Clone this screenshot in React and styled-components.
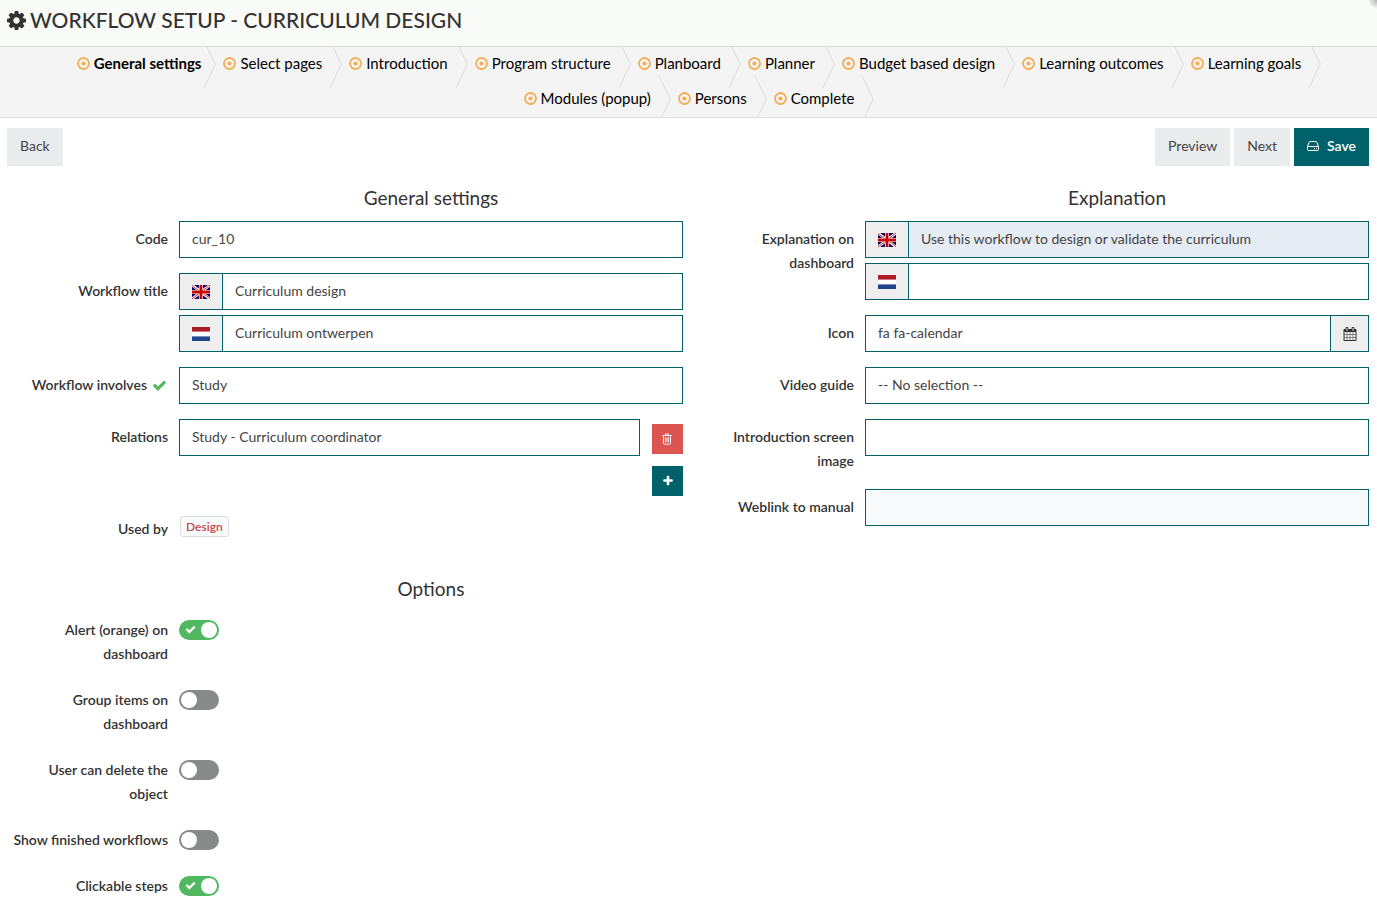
import React, { useState } from "react";
import styled, { createGlobalStyle, css } from "styled-components";

const teal = "#00616b";
const green = "#50b860";

const GlobalStyle = createGlobalStyle`
  *, *::before, *::after { box-sizing: border-box; }
  body {
    margin: 0;
    background: #fff;
    color: #333;
    font: 14px/24px Lato, "Noto Sans", sans-serif;
  }
  button, input, select { font: inherit; color: inherit; margin: 0; border-radius: 0; }
`;

const Header = styled.header`
  display: flex;
  align-items: center;
  gap: 4px;
  height: 47px;
  padding: 0 7px 6px;
  border-bottom: 1px solid #dcdedd;
  background: radial-gradient(circle at top right, #b4b4b4 0, #f9fbf8 9px);
`;

const PageTitle = styled.h1`
  margin: 0;
  font-size: 21px;
  line-height: 28px;
  font-weight: 500;
  text-transform: uppercase;
`;

const Steps = styled.ol`
  display: flex;
  flex-wrap: wrap;
  justify-content: center;
  margin: 0;
  padding: 0 0 0 28px;
  list-style: none;
  overflow: hidden;
  background: #f4f4f4;
  border-bottom: 1px solid #dcdedd;
`;

const Step = styled.li`
  position: relative;
  height: 35px;
  padding-right: ${(p) => (p.$active ? 22 : 27)}px;
`;

const StepLink = styled.a`
  display: flex;
  align-items: center;
  gap: 4px;
  height: 32px;
  color: #000;
  font-size: 15px;
  font-weight: ${(p) => (p.$active ? 700 : 400)};
  text-decoration: none;
`;

const Chevron = styled.svg`
  position: absolute;
  top: -7px;
  right: 7px;
  fill: none;
  stroke: #dcdcdc;
`;

const Toolbar = styled.div`
  display: flex;
  gap: 4px;
  padding: 10px 8px 0 7px;
`;

const Button = styled.button`
  display: flex;
  align-items: center;
  gap: 8px;
  height: 38px;
  padding: 0 13px 2px;
  border: 0;
  background: #eaebed;
  color: #444;
  cursor: pointer;
  ${(p) =>
    p.$primary &&
    css`
      background: ${teal};
      color: #fff;
      font-weight: 600;
    `}
`;

const Spacer = styled.div`
  flex: 1;
`;

const Columns = styled.main`
  display: grid;
  grid-template-columns: 1fr 1fr;
  gap: 10px;
  padding: 20px 8px 0 7px;
`;

const Column = styled.div`
  display: flex;
  flex-direction: column;
  gap: 35px;
`;

const Section = styled.section`
  display: flex;
  flex-direction: column;
  gap: 15px;
`;

const SectionTitle = styled.h2`
  margin: 0 0 -4px 172px;
  font-size: 19px;
  line-height: 24px;
  font-weight: 400;
  text-align: center;
`;

const Row = styled.div`
  display: grid;
  grid-template-columns: 161px minmax(0, 1fr);
  gap: 11px;
`;

const Label = styled.label`
  padding: 6px 0 0 4px;
  margin-bottom: 1px;
  font-weight: 600;
  text-align: right;
`;

const CheckMark = styled.span`
  display: inline-flex;
  margin: 0 2px 2px 6px;
  vertical-align: middle;
`;

const Stack = styled.div`
  display: flex;
  flex-direction: column;
  gap: 5px;
`;

const Group = styled.div`
  display: flex;
`;

const fieldStyle = css`
  appearance: none;
  flex: 1;
  width: 100%;
  min-width: 0;
  height: 37px;
  padding: 0 12px 2px;
  border: 1px solid ${teal};
  outline: 0;
  color: #444;
`;

const fills = { plain: "#fff", focus: "#e5ecf4", pale: "#f8f9fb" };

const Input = styled.input`
  ${fieldStyle}
  background: ${(p) => fills[p.$fill || "plain"]};
`;

const Select = styled.select`
  ${fieldStyle}
  background: #fff;
`;

const Addon = styled.span`
  display: flex;
  align-items: center;
  justify-content: center;
  width: 43px;
  height: 37px;
  border: solid ${teal};
  border-width: 1px 0 1px 1px;
  background: #eee;
`;

const PickerButton = styled.button`
  display: flex;
  align-items: center;
  justify-content: center;
  width: 38px;
  height: 37px;
  padding: 0;
  border: solid ${teal};
  border-width: 1px 1px 1px 0;
  background: #eee;
`;

const RelationRow = styled.div`
  display: flex;
  align-items: flex-start;
  gap: 12px;
`;

const RelationActions = styled.div`
  display: flex;
  flex-direction: column;
  gap: 12px;
  padding-top: 5px;
`;

const SquareButton = styled.button`
  display: flex;
  align-items: center;
  justify-content: center;
  width: 31px;
  height: 30px;
  padding: 0;
  border: 0;
  color: #fff;
  background: ${(p) => (p.$danger ? "#dd5551" : teal)};
`;

const Tag = styled.a`
  justify-self: start;
  align-self: start;
  margin: 5px 0 0 1px;
  padding: 0 5px;
  border: 1px solid #d9dde1;
  border-radius: 3px;
  background: #f9fafc;
  color: #c44b4b;
  font-size: 12px;
  line-height: 19px;
  font-weight: 600;
  text-decoration: none;
`;

const Switch = styled.span`
  position: relative;
  width: 40px;
  height: 20px;
  margin-top: 8px;
`;

const SwitchInput = styled.input`
  appearance: none;
  display: block;
  width: 40px;
  height: 20px;
  border-radius: 10px;
  background: ${(p) => (p.checked ? green : "#88898b")};
  cursor: pointer;

  &::after {
    content: "";
    position: absolute;
    top: 2px;
    left: ${(p) => (p.checked ? "22px" : "2px")};
    width: 16px;
    height: 16px;
    border-radius: 50%;
    background: #fff;
  }
`;

const SwitchCheck = styled.span`
  position: absolute;
  top: 4px;
  left: 6px;
  display: flex;
  pointer-events: none;
`;

const glyphs = {
  cog: "M1152 896q0-106-75-181t-181-75-181 75-75 181 75 181 181 75 181-75 75-181zm512-109v222q0 12-8 23t-20 13l-185 28q-19 54-39 91 35 50 107 138 10 12 10 25t-9 23q-27 37-99 108t-94 71q-12 0-26-9l-138-108q-44 23-91 38-16 136-29 186-7 28-36 28h-222q-14 0-24.5-8.5t-11.5-21.5l-28-184q-49-16-90-37l-141 107q-10 9-25 9-14 0-25-11-126-114-165-168-7-10-7-23 0-12 8-23 15-21 51-66.5t54-70.5q-27-50-41-99l-183-27q-13-2-21-12.5t-8-23.5v-222q0-12 8-23t19-13l186-28q14-46 39-92-40-57-107-138-10-12-10-24 0-10 9-23 26-36 98.5-107.5t94.5-71.5q13 0 26 10l138 107q44-23 91-38 16-136 29-186 7-28 36-28h222q14 0 24.5 8.5t11.5 21.5l28 184q49 16 90 37l142-107q9-9 24-9 13 0 25 10 129 119 165 170 7 8 7 22 0 12-8 23-15 21-51 66.5t-54 70.5q26 50 41 98l183 28q13 2 21 12.5t8 23.5z",
  plus: "M1600 736v192q0 40-28 68t-68 28h-416v416q0 40-28 68t-68 28h-192q-40 0-68-28t-28-68v-416h-416q-40 0-68-28t-28-68v-192q0-40 28-68t68-28h416v-416q0-40 28-68t68-28h192q40 0 68 28t28 68v416h416q40 0 68 28t28 68z",
  check:
    "M1671 566q0 40-28 68l-724 724-136 136q-28 28-68 28t-68-28l-136-136-362-362q-28-28-28-68t28-68l136-136q28-28 68-28t68 28l294 295 656-657q28-28 68-28t68 28l136 136q28 28 28 68z",
  calendar:
    "M192 1664h288v-288h-288v288zm352 0h320v-288h-320v288zm-352-352h288v-320h-288v320zm352 0h320v-320h-320v320zm-352-384h288v-288h-288v288zm736 736h320v-288h-320v288zm-384-736h320v-288h-320v288zm768 736h288v-288h-288v288zm-384-352h320v-320h-320v320zm-352-864v-288q0-13-9.5-22.5t-22.5-9.5h-64q-13 0-22.5 9.5t-9.5 22.5v288q0 13 9.5 22.5t22.5 9.5h64q13 0 22.5-9.5t9.5-22.5zm736 864h288v-320h-288v320zm-384-384h320v-288h-320v288zm384 0h288v-288h-288v288zm32-480v-288q0-13-9.5-22.5t-22.5-9.5h-64q-13 0-22.5 9.5t-9.5 22.5v288q0 13 9.5 22.5t22.5 9.5h64q13 0 22.5-9.5t9.5-22.5zm384-64v1280q0 52-38 90t-90 38h-1408q-52 0-90-38t-38-90v-1280q0-52 38-90t90-38h128v-96q0-66 47-113t113-47h64q66 0 113 47t47 113v96h384v-96q0-66 47-113t113-47h64q66 0 113 47t47 113v96h128q52 0 90 38t38 90z",
};

const Glyph = ({ name, size, color = "currentColor", box = "0 0 1792 1792" }) => (
  <svg width={size} height={size} viewBox={box} fill={color} aria-hidden="true">
    <path d={glyphs[name]} />
  </svg>
);

const StepDot = () => (
  <svg width="13" height="13" viewBox="0 0 13 13" aria-hidden="true">
    <circle cx="6.5" cy="6.5" r="5.5" fill="none" stroke="#f3ae55" strokeWidth="1.8" />
    <circle cx="6.5" cy="6.5" r="2.1" fill="#f3ae55" />
  </svg>
);

const DriveIcon = () => (
  <svg width="12" height="12" viewBox="0 0 12 12" fill="none" stroke="#fff" aria-hidden="true">
    <path d="M.5 6.5 2.1 2.3Q2.4 1.5 3.2 1.5H8.8Q9.6 1.5 9.9 2.3L11.5 6.5V9.6Q11.5 10.5 10.6 10.5H1.4Q.5 10.5 .5 9.6ZM.5 6.5H11.5" />
    <path d="M7 8.5H8M9 8.5H10" />
  </svg>
);

const TrashIcon = () => (
  <svg width="11" height="12" viewBox="0 0 11 12" fill="none" stroke="#fff" strokeWidth=".9" aria-hidden="true">
    <path d="M.3 2.5H9.7M3.2 2.4 3.7 .9H6.3L6.8 2.4M1.5 2.5V10.2Q1.5 11.2 2.4 11.2H7.6Q8.5 11.2 8.5 10.2V2.5M3.4 4.3V9.3M5 4.3V9.3M6.6 4.3V9.3" />
  </svg>
);

const FlagUK = () => (
  <svg width="18" height="14" viewBox="0 0 18 14" role="img" aria-label="English">
    <path fill="#006" d="M0 0H18V14H0z" />
    <path stroke="#fff" strokeWidth="2.6" d="M0 0 18 14M18 0 0 14" />
    <path stroke="#d22" strokeWidth="1" d="M0 .5 9 7.5M18 0 9 7M18 13.5 9 6.5M0 14 9 7" />
    <path stroke="#fff" strokeWidth="4.2" d="M9 0V14M0 7H18" />
    <path stroke="#c00" strokeWidth="2.8" d="M9 0V14M0 7H18" />
  </svg>
);

const FlagNL = () => (
  <svg width="18" height="14" viewBox="0 0 18 14" role="img" aria-label="Dutch">
    <path fill="#fff" d="M0 0H18V14H0z" />
    <path fill="#ae1c28" d="M0 0H18V4.6H0z" />
    <path fill="#21468b" d="M0 9.4H18V14H0z" />
  </svg>
);

const steps = [
  "General settings",
  "Select pages",
  "Introduction",
  "Program structure",
  "Planboard",
  "Planner",
  "Budget based design",
  "Learning outcomes",
  "Learning goals",
  "Modules (popup)",
  "Persons",
  "Complete",
];

const options = [
  ["Alert (orange) on dashboard", true],
  ["Group items on dashboard", false],
  ["User can delete the object", false],
  ["Show finished workflows", false],
  ["Clickable steps", true],
];

function Toggle({ label, id, initial }) {
  const [on, setOn] = useState(initial);
  return (
    <Row>
      <Label htmlFor={id}>{label}</Label>
      <Switch>
        <SwitchInput id={id} type="checkbox" checked={on} onChange={() => setOn(!on)} />
        {on && (
          <SwitchCheck>
            <Glyph name="check" size={11} color="#fff" />
          </SwitchCheck>
        )}
      </Switch>
    </Row>
  );
}

function Translated({ id, label, en, nl, fill }) {
  return (
    <Row>
      <Label htmlFor={id}>{label}</Label>
      <Stack>
        <Group>
          <Addon>
            <FlagUK />
          </Addon>
          <Input id={id} defaultValue={en} $fill={fill} />
        </Group>
        <Group>
          <Addon>
            <FlagNL />
          </Addon>
          <Input aria-label={`${label} (Dutch)`} defaultValue={nl} />
        </Group>
      </Stack>
    </Row>
  );
}

export default function App() {
  return (
    <>
      <GlobalStyle />
      <Header>
        <Glyph name="cog" size={19} box="128 128 1536 1536" />
        <PageTitle>Workflow setup - Curriculum design</PageTitle>
      </Header>
      <nav aria-label="Workflow steps">
        <Steps>
          {steps.map((name, i) => (
            <Step key={name} $active={i === 0}>
              <StepLink href="#" $active={i === 0} aria-current={i === 0 ? "step" : undefined}>
                <StepDot />
                {name}
              </StepLink>
              <Chevron width="13" height="48" viewBox="0 0 13 48" aria-hidden="true">
                <path d="M.5 0 12.3 24 1 48" />
              </Chevron>
            </Step>
          ))}
        </Steps>
      </nav>
      <Toolbar>
        <Button type="button">Back</Button>
        <Spacer />
        <Button type="button">Preview</Button>
        <Button type="button">Next</Button>
        <Button type="button" $primary>
          <DriveIcon />
          Save
        </Button>
      </Toolbar>
      <Columns>
        <Column>
          <Section>
            <SectionTitle>General settings</SectionTitle>
            <Row>
              <Label htmlFor="code">Code</Label>
              <Input id="code" defaultValue="cur_10" />
            </Row>
            <Translated id="title" label="Workflow title" en="Curriculum design" nl="Curriculum ontwerpen" />
            <Row>
              <Label htmlFor="involves">
                Workflow involves
                <CheckMark>
                  <Glyph name="check" size={13} color={green} box="120 200 1560 1400" />
                </CheckMark>
              </Label>
              <Select id="involves">
                <option>Study</option>
              </Select>
            </Row>
            <Row>
              <Label htmlFor="relations">Relations</Label>
              <RelationRow>
                <Select id="relations">
                  <option>Study - Curriculum coordinator</option>
                </Select>
                <RelationActions>
                  <SquareButton type="button" $danger aria-label="Remove relation">
                    <TrashIcon />
                  </SquareButton>
                  <SquareButton type="button" aria-label="Add relation">
                    <Glyph name="plus" size={12} />
                  </SquareButton>
                </RelationActions>
              </RelationRow>
            </Row>
            <Row>
              <Label as="span">Used by</Label>
              <Tag href="#">Design</Tag>
            </Row>
          </Section>
          <Section>
            <SectionTitle>Options</SectionTitle>
            {options.map(([label, initial], i) => (
              <Toggle key={label} id={`option-${i}`} label={label} initial={initial} />
            ))}
          </Section>
        </Column>
        <Column>
          <Section>
            <SectionTitle>Explanation</SectionTitle>
            <Translated
              id="explanation"
              label="Explanation on dashboard"
              en="Use this workflow to design or validate the curriculum"
              nl=""
              fill="focus"
            />
            <Row>
              <Label htmlFor="icon">Icon</Label>
              <Group>
                <Input id="icon" defaultValue="fa fa-calendar" />
                <PickerButton type="button" aria-label="Pick an icon">
                  <Glyph name="calendar" size={14} />
                </PickerButton>
              </Group>
            </Row>
            <Row>
              <Label htmlFor="video">Video guide</Label>
              <Select id="video">
                <option>-- No selection --</option>
              </Select>
            </Row>
            <Row>
              <Label htmlFor="image">Introduction screen image</Label>
              <Select id="image">
                <option></option>
              </Select>
            </Row>
            <Row>
              <Label htmlFor="manual">Weblink to manual</Label>
              <Input id="manual" $fill="pale" />
            </Row>
          </Section>
        </Column>
      </Columns>
    </>
  );
}
